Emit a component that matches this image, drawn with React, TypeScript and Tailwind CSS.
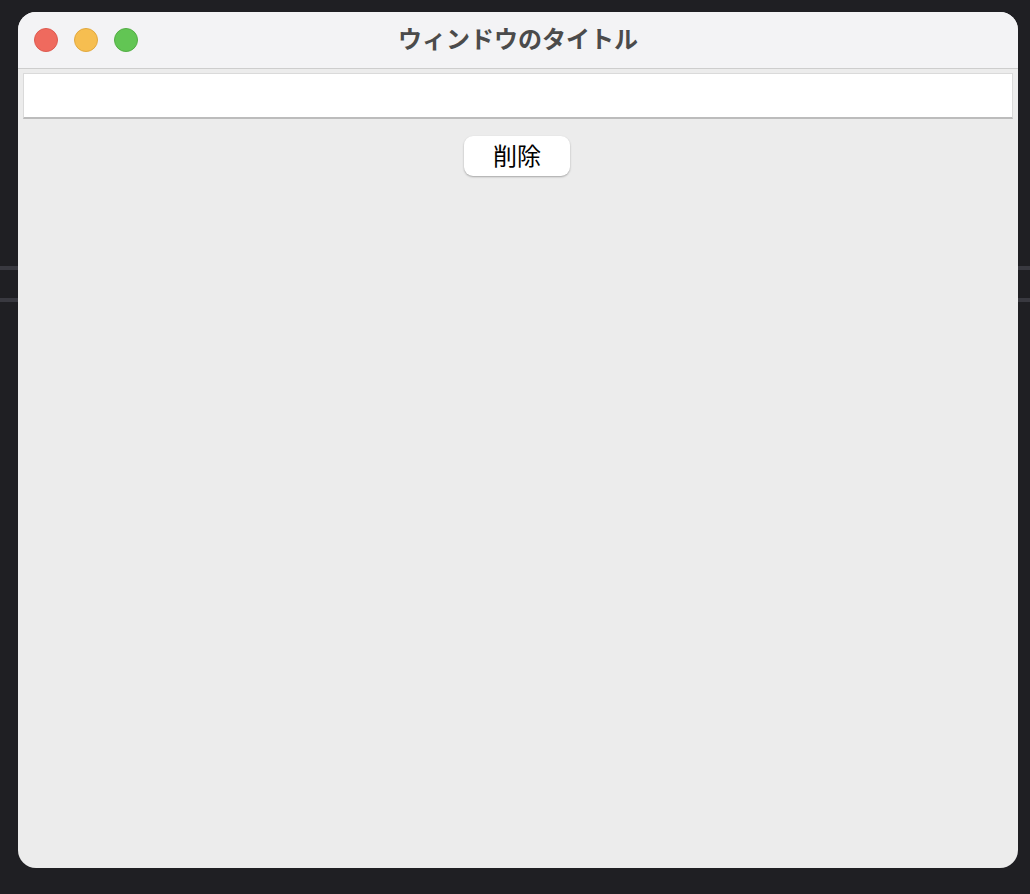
import React from "react";

export default function App() {
  return (
    <div className="relative w-[1030px] h-[894px] bg-[#1f1f23] overflow-hidden" style={{ fontFamily: '"Noto Sans CJK JP", "Noto Sans", sans-serif' }}>
      <div className="absolute left-0 right-0 top-[266px] h-[4px] bg-[#393940]" />
      <div className="absolute left-0 right-0 top-[298px] h-[4px] bg-[#393940]" />
      <div className="absolute left-[18px] top-[12px] w-[1000px] h-[856px] rounded-[18px] overflow-hidden bg-[#ececec] flex flex-col">
        <div className="relative h-[57px] shrink-0 bg-[#f3f3f5] border-b border-[#cdcdcd] flex items-center justify-center">
          <div className="absolute left-[16px] top-[16px] flex gap-[16px]">
            <div className="w-[24px] h-[24px] rounded-full bg-[#ef6a5e] border border-[#dd5a50]" />
            <div className="w-[24px] h-[24px] rounded-full bg-[#f6be50] border border-[#e1a83f]" />
            <div className="w-[24px] h-[24px] rounded-full bg-[#62c554] border border-[#53ad45]" />
          </div>
          <span className="text-[24px] font-bold text-[#4b4b4b] leading-none mt-[-4px]">ウィンドウのタイトル</span>
        </div>
        <div className="px-[5px] pt-[4px]">
          <div className="h-[46px] bg-white border border-[#dadada] border-b-[#bcbcbc] border-b-2" />
        </div>
        <div className="flex justify-center pt-[17px] pr-[2px]">
          <button className="w-[106px] h-[40px] rounded-[9px] bg-white text-[24px] text-black leading-none shadow-[0_1px_2px_rgba(0,0,0,0.3)] flex items-center justify-center pb-[2px]">削除</button>
        </div>
      </div>
    </div>
  );
}
